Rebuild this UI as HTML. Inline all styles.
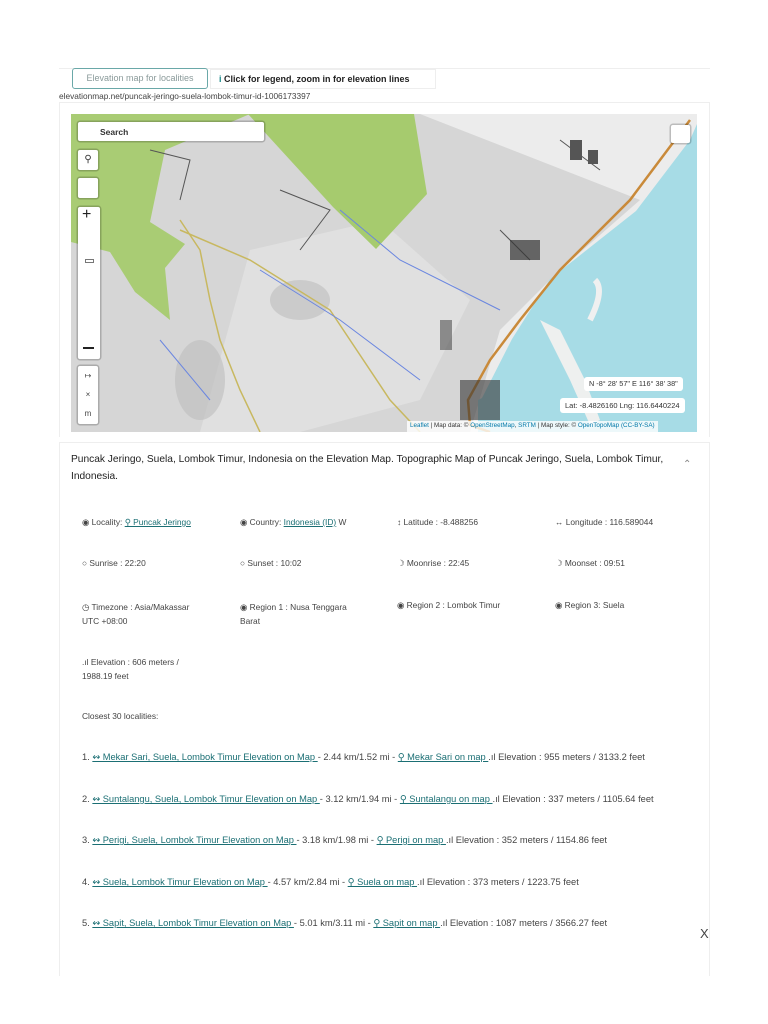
<!DOCTYPE html>
<html><head><meta charset="utf-8"><style>
*{margin:0;padding:0;box-sizing:border-box}
body{width:768px;height:1024px;background:#fff;font-family:"Liberation Sans",sans-serif;color:#333;position:relative;overflow:hidden}
.a{position:absolute;white-space:nowrap}
a{color:#1b6f74;text-decoration:underline}
.s{font-size:8.4px;color:#444}
.l{font-size:9.3px;color:#444}
.btn{position:absolute;background:#fff;border-radius:2px;box-shadow:0 0 0 1.5px rgba(0,0,0,.2)}
</style></head><body>
<div class="a" style="left:59px;top:68px;width:651px;height:1px;background:#eee"></div>
<div class="a" style="left:72px;top:68px;width:136px;height:21px;border:1px solid #6aa8a8;border-radius:3px;font-size:9px;color:#8a9a9a;text-align:center;line-height:19px">Elevation map for localities</div>
<div class="a" style="left:210px;top:69px;width:226px;height:20px;border:1px solid #eee;font-size:9px;font-weight:bold;color:#222;line-height:18px;padding-left:8px"><span style="color:#1b8a8a">i</span> Click for legend, zoom in for elevation lines</div>
<div class="a" style="left:59px;top:91px;font-size:8.3px;color:#444">elevationmap.net/puncak-jeringo-suela-lombok-timur-id-1006173397</div>
<div class="a" style="left:59px;top:102px;width:651px;height:1px;background:#eee"></div>
<div class="a" style="left:59px;top:102px;width:1px;height:335px;background:#eee"></div>
<div class="a" style="left:709px;top:102px;width:1px;height:335px;background:#eee"></div>
<svg class="a" style="left:71px;top:114px" width="626" height="318" viewBox="71 114 626 318">
<rect x="71" y="114" width="626" height="318" fill="#d6d6d6"/>
<polygon points="420,114 697,114 697,430 470,432 500,330 560,270 640,200" fill="#ececec"/>
<polygon points="250,250 380,220 470,300 420,400 300,432 200,432" fill="#e0e0e0"/>
<ellipse cx="300" cy="300" rx="30" ry="20" fill="#bdbdbd" opacity=".6"/>
<ellipse cx="200" cy="380" rx="25" ry="40" fill="#bdbdbd" opacity=".6"/>
<ellipse cx="330" cy="150" rx="30" ry="20" fill="#bdbdbd" opacity=".5"/>
<polygon points="71,114 250,114 165,150 150,222 185,244 165,268 170,320 135,292 110,252 71,242" fill="#a9cc74"/>
<polygon points="248,114 414,114 427,194 376,249 333,207" fill="#a6cb6e"/>
<polygon points="697,124 697,432 478,432 478,400 482,398 512,339 550,279 636,211 690,140" fill="#a7dce6"/>
<polygon points="540,320 560,330 585,380 600,420 590,425 570,380" fill="#eef0ef"/>
<path d="M595,280 Q605,290 590,320" stroke="#f0f0f0" stroke-width="6" fill="none"/>
<path d="M690,120 L660,160 L630,200 L560,270 L520,320 L490,360 L468,400 L470,425 L490,432" stroke="#c98a3a" stroke-width="2.5" fill="none"/>
<path d="M180,220 L200,250 L210,300 L220,340 L240,390 L260,432" stroke="#c8b860" stroke-width="1.5" fill="none"/>
<path d="M180,230 L250,260 L330,310 L390,400 L420,432" stroke="#c8b860" stroke-width="1.5" fill="none"/>
<path d="M340,210 L400,260 L500,310 M260,270 L340,320 L420,380 M160,340 L210,400" stroke="#6a86e0" stroke-width="1" fill="none"/>
<path d="M150,150 L190,160 L180,200 M280,190 L330,210 L300,250 M500,230 L530,260 M560,140 L600,170" stroke="#555" stroke-width="1" fill="none"/>
<rect x="570" y="140" width="12" height="20" fill="#555"/><rect x="588" y="150" width="10" height="14" fill="#555"/>
<rect x="510" y="240" width="30" height="20" fill="#333" opacity=".7"/>
<rect x="460" y="380" width="40" height="40" fill="#333" opacity=".6"/>
<rect x="440" y="320" width="12" height="30" fill="#333" opacity=".5"/>
</svg>
<div class="btn" style="left:78px;top:122px;width:186px;height:19px;font-size:8.5px;font-weight:bold;color:#333;padding:5px 0 0 22px">Search</div>
<div class="btn" style="left:78px;top:150px;width:20px;height:20px;font-size:10px;text-align:center;line-height:20px">&#9906;</div>
<div class="btn" style="left:78px;top:178px;width:20px;height:20px"></div>
<div class="btn" style="left:78px;top:207px;width:22px;height:152px"></div>
<div class="a" style="left:82px;top:206px;font-size:16px;color:#222">+</div>
<div class="a" style="left:85px;top:259px;width:9px;height:4px;border:1px solid #777"></div>
<div class="a" style="left:83px;top:347px;width:11px;height:2px;background:#222"></div>
<div class="btn" style="left:78px;top:366px;width:20px;height:58px;font-size:8px;text-align:center;line-height:19px;color:#444">&#8614;<br>&#215;<br>m</div>
<div class="btn" style="left:671px;top:125px;width:19px;height:18px"></div>
<div class="a" style="left:584px;top:377px;height:14px;background:#fff;border-radius:3px;font-size:7.3px;padding:2px 5px;color:#333">N -8° 28' 57" E 116° 38' 38"</div>
<div class="a" style="left:560px;top:398px;height:15px;background:#fff;border-radius:3px;font-size:7.5px;padding:3px 5px;color:#333">Lat: -8.4826160 Lng: 116.6440224</div>
<div class="a" style="left:407px;top:421px;height:11px;background:rgba(255,255,255,.8);font-size:6.3px;padding:1px 3px;color:#333"><span style="color:#0078a8">Leaflet</span> | Map data: © <span style="color:#0078a8">OpenStreetMap</span>, <span style="color:#0078a8">SRTM</span> | Map style: © <span style="color:#0078a8">OpenTopoMap</span> <span style="color:#0078a8">(CC-BY-SA)</span></div>

<div class="a" style="left:59px;top:442px;width:651px;height:534px;border:1px solid #eee;border-bottom:none"></div>
<div class="a" style="left:71px;top:451px;font-size:10.2px;color:#222;line-height:17px;white-space:normal;width:610px">Puncak Jeringo, Suela, Lombok Timur, Indonesia on the Elevation Map. Topographic Map of Puncak Jeringo, Suela, Lombok Timur, Indonesia.</div>
<div class="a" style="left:683px;top:459px;font-size:10px;color:#888">&#8963;</div>

<div class="a s" style="left:82px;top:517px">&#9673; Locality: <a>&#9906; Puncak Jeringo</a></div>
<div class="a s" style="left:240px;top:517px">&#9673; Country: <a>Indonesia (ID)</a> W</div>
<div class="a s" style="left:397px;top:517px">&#8597; Latitude : -8.488256</div>
<div class="a s" style="left:555px;top:517px">&#8596; Longitude : 116.589044</div>
<div class="a s" style="left:82px;top:558px">&#9675; Sunrise : 22:20</div>
<div class="a s" style="left:240px;top:558px">&#9675; Sunset : 10:02</div>
<div class="a s" style="left:397px;top:558px">&#9789; Moonrise : 22:45</div>
<div class="a s" style="left:555px;top:558px">&#9789; Moonset : 09:51</div>
<div class="a s" style="left:82px;top:600px;line-height:14px">&#9719; Timezone : Asia/Makassar<br>UTC +08:00</div>
<div class="a s" style="left:240px;top:600px;line-height:14px">&#9673; Region 1 : Nusa Tenggara<br>Barat</div>
<div class="a s" style="left:397px;top:600px">&#9673; Region 2 : Lombok Timur</div>
<div class="a s" style="left:555px;top:600px">&#9673; Region 3: Suela</div>
<div class="a s" style="left:82px;top:655px;line-height:14px">.ıl Elevation : 606 meters /<br>1988.19 feet</div>
<div class="a s" style="left:82px;top:711px">Closest 30 localities:</div>

<div class="a l" style="left:82px;top:752px">1. <a>&#8621; Mekar Sari, Suela, Lombok Timur Elevation on Map </a> - 2.44 km/1.52 mi - <a>&#9906; Mekar Sari on map </a>.ıl Elevation : 955 meters / 3133.2 feet</div>
<div class="a l" style="left:82px;top:794px">2. <a>&#8621; Suntalangu, Suela, Lombok Timur Elevation on Map </a> - 3.12 km/1.94 mi - <a>&#9906; Suntalangu on map </a>.ıl Elevation : 337 meters / 1105.64 feet</div>
<div class="a l" style="left:82px;top:835px">3. <a>&#8621; Perigi, Suela, Lombok Timur Elevation on Map </a> - 3.18 km/1.98 mi - <a>&#9906; Perigi on map </a>.ıl Elevation : 352 meters / 1154.86 feet</div>
<div class="a l" style="left:82px;top:877px">4. <a>&#8621; Suela, Lombok Timur Elevation on Map </a> - 4.57 km/2.84 mi - <a>&#9906; Suela on map </a>.ıl Elevation : 373 meters / 1223.75 feet</div>
<div class="a l" style="left:82px;top:918px">5. <a>&#8621; Sapit, Suela, Lombok Timur Elevation on Map </a> - 5.01 km/3.11 mi - <a>&#9906; Sapit on map </a>.ıl Elevation : 1087 meters / 3566.27 feet</div>
<div class="a" style="left:700px;top:926px;font-size:13px;color:#444">X</div>
</body></html>
